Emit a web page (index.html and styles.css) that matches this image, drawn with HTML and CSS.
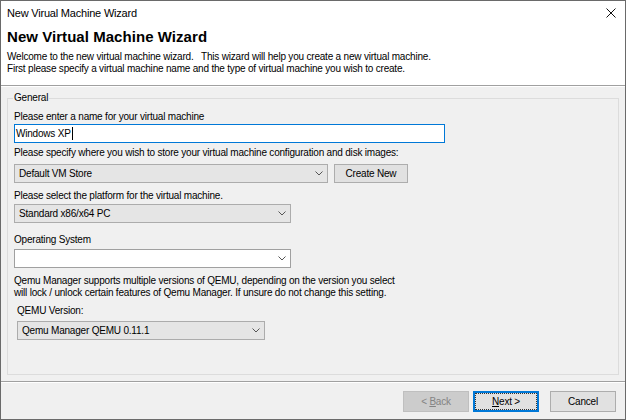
FILE: index.html
```html
<!DOCTYPE html>
<html>
<head>
<meta charset="utf-8">
<link rel="stylesheet" href="styles.css">
</head>
<body>
<div class="window">
  <div class="titlebar">
    <span class="title">New Virual Machine Wizard</span>
    <svg class="close" width="10" height="10" viewBox="0 0 10 10"><path d="M0.5 0.5 L9.5 9.5 M9.5 0.5 L0.5 9.5" stroke="#111" stroke-width="1" fill="none"/></svg>
  </div>
  <div class="header">
    <h1 class="heading">New Virtual Machine Wizard</h1>
    <p class="intro">Welcome to the new virtual machine wizard.&nbsp;&nbsp; This wizard will help you create a new virtual machine.<br>First please specify a virtual machine name and the type of virtual machine you wish to create.</p>
  </div>
  <div class="etch"></div>
  <main class="main">
    <fieldset class="group">
      <legend class="legend">General</legend>
      <div class="label">Please enter a name for your virtual machine</div>
      <div class="textbox">Windows XP<span class="caret"></span></div>
      <div class="label gap-4">Please specify where you wish to store your virtual machine configuration and disk images:</div>
      <div class="row gap-5">
        <div class="combo list w-store"><span class="combo-text">Default VM Store</span><span class="arrow"><svg width="8" height="5" viewBox="0 0 8 5"><path d="M0.5 0.5 L4 4 L7.5 0.5" stroke="#555" stroke-width="1" fill="none"/></svg></span></div>
        <div class="button create">Create New</div>
      </div>
      <div class="label gap-7">Please select the platform for the virtual machine.</div>
      <div class="combo list w-platform gap-2"><span class="combo-text">Standard x86/x64 PC</span><span class="arrow"><svg width="8" height="5" viewBox="0 0 8 5"><path d="M0.5 0.5 L4 4 L7.5 0.5" stroke="#555" stroke-width="1" fill="none"/></svg></span></div>
      <div class="label gap-11">Operating System</div>
      <div class="combo edit w-platform gap-3"><span class="combo-text"></span><span class="arrow"><svg width="8" height="5" viewBox="0 0 8 5"><path d="M0.5 0.5 L4 4 L7.5 0.5" stroke="#555" stroke-width="1" fill="none"/></svg></span></div>
      <p class="para gap-7">Qemu Manager supports multiple versions of QEMU, depending on the version you select<br>will lock / unlock certain features of Qemu Manager. If unsure do not change this setting.</p>
      <div class="label indent gap-6">QEMU Version:</div>
      <div class="combo list w-qemu indent gap-4"><span class="combo-text">Qemu Manager QEMU 0.11.1</span><span class="arrow"><svg width="8" height="5" viewBox="0 0 8 5"><path d="M0.5 0.5 L4 4 L7.5 0.5" stroke="#555" stroke-width="1" fill="none"/></svg></span></div>
    </fieldset>
  </main>
  <div class="etch"></div>
  <footer class="footer">
    <div class="button disabled">&lt;&nbsp;<u>B</u>ack</div>
    <div class="button default"><u>N</u>ext&nbsp;&gt;</div>
    <div class="button cancel">Cancel</div>
  </footer>
</div>
</body>
</html>
```
FILE: styles.css
```css
html, body {
  margin: 0;
  padding: 0;
  background: #f0f0f0;
}
body {
  font-family: "Liberation Sans", Arial, sans-serif;
  font-size: 10px;
  letter-spacing: -0.2px;
  color: #000;
}
.window {
  width: 626px;
  height: 420px;
  box-sizing: border-box;
  border: 1px solid #6a6a6a;
  display: flex;
  flex-direction: column;
  background: #f0f0f0;
}
.titlebar {
  height: 24px;
  flex: none;
  background: #fff;
  display: flex;
  align-items: center;
  padding-left: 6px;
}
.title {
  font-size: 11px;
  letter-spacing: -0.2px;
  line-height: 14px;
}
.close {
  margin-left: auto;
  margin-right: 9px;
}
.header {
  height: 60px;
  flex: none;
  box-sizing: border-box;
  background: #fff;
  padding: 3px 6px 0;
}
.heading {
  margin: 0;
  font-size: 15px;
  font-weight: bold;
  letter-spacing: 0.05px;
  line-height: 18px;
}
.intro {
  margin: 5px 0 0;
  line-height: 12px;
}
.etch {
  flex: none;
  height: 0;
  border-top: 1px solid #a0a0a0;
  border-bottom: 1px solid #fff;
}
.main {
  flex: 1;
  display: flex;
  flex-direction: column;
  min-height: 0;
}
.group {
  flex: 1;
  margin: 5px 6px 6px;
  padding: 7px 6px 0;
  border: 1px solid #dcdcdc;
  min-width: 0;
  min-height: 0;
  display: flex;
  flex-direction: column;
  align-items: flex-start;
}
.legend {
  padding: 0 1px;
  margin-left: -1px;
  line-height: 12px;
}
.label {
  line-height: 12px;
  white-space: nowrap;
}
.para {
  margin-bottom: 0;
  line-height: 12px;
  white-space: nowrap;
}
.gap-2 { margin-top: 2px; }
.gap-3 { margin-top: 3px; }
.gap-4 { margin-top: 4px; }
.gap-5 { margin-top: 5px; }
.gap-6 { margin-top: 6px; }
.gap-7 { margin-top: 7px; }
.gap-11 { margin-top: 11px; }
.indent { margin-left: 3px; }
.textbox {
  margin-top: 1px;
  width: 431px;
  height: 19px;
  box-sizing: border-box;
  border: 1px solid #0078d7;
  background: #fff;
  padding-left: 1px;
  display: flex;
  align-items: center;
  line-height: 12px;
}
.caret {
  display: inline-block;
  width: 1px;
  height: 13px;
  background: #000;
  margin-left: 1px;
}
.row {
  display: flex;
  align-items: center;
}
.combo {
  height: 19px;
  box-sizing: border-box;
  display: flex;
  align-items: center;
  line-height: 12px;
}
.combo.list {
  background: #e5e5e5;
  border: 1px solid #acacac;
}
.combo.edit {
  background: #fff;
  border: 1px solid #a0a0a0;
}
.combo-text {
  flex: 1;
  padding-left: 4px;
  white-space: nowrap;
}
.arrow {
  width: 17px;
  height: 100%;
  display: flex;
  align-items: center;
  justify-content: center;
}
.w-store { width: 314px; }
.w-platform { width: 277px; }
.w-qemu { width: 248px; }
.button {
  height: 21px;
  width: 66px;
  box-sizing: border-box;
  background: #e1e1e1;
  border: 1px solid #adadad;
  display: flex;
  align-items: center;
  justify-content: center;
  line-height: 12px;
  white-space: nowrap;
}
.button.create {
  width: 74px;
  height: 19px;
  margin-left: 6px;
}
.footer {
  flex: none;
  height: 36px;
  box-sizing: border-box;
  display: flex;
  justify-content: flex-end;
  align-items: flex-start;
  padding: 8px 9px 0 0;
}
.button.disabled {
  background: #cccccc;
  border-color: #bfbfbf;
  color: #838383;
}
.button.default {
  margin-left: 4px;
  border-color: #0078d7;
  box-shadow: inset 0 0 0 1px #0078d7;
  outline: 1px dotted #333;
  outline-offset: -3px;
}
.button.cancel {
  margin-left: 11px;
}
```
